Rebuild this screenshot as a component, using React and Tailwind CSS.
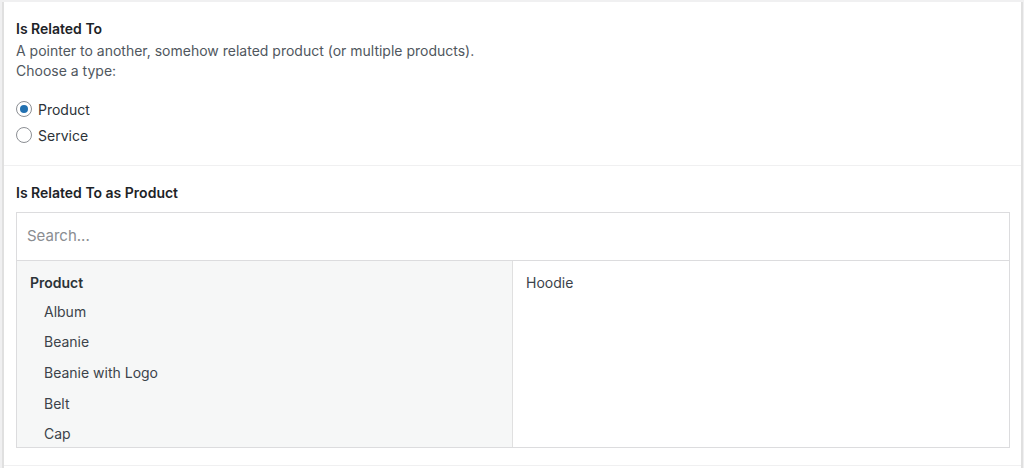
import React, { useState } from "react";

const products = ["Album", "Beanie", "Beanie with Logo", "Belt", "Cap"];

const Radio = ({ checked, label, onChange }) => (
  <label className="flex items-center gap-[6px] h-[26px] cursor-pointer" onClick={onChange}>
    <span className="w-[16px] h-[16px] rounded-full border border-[#8c8f94] bg-white flex items-center justify-center">
      {checked && <span className="w-[8px] h-[8px] rounded-full bg-[#2271b1]" />}
    </span>
    <span className="text-[14px] text-[#2c3338]">{label}</span>
  </label>
);

const App = () => {
  const [type, setType] = useState("product");

  return (
    <div
      className="w-[1024px] h-[468px] overflow-hidden bg-[#f0f0f1] pt-[2px] pl-[2px] pr-[1px]"
      style={{ fontFamily: "Inter, Roboto, 'Noto Sans', sans-serif" }}
    >
      <div className="h-full bg-white border-l-2 border-r-2 border-[#e0e0e0]">
        <div className="pl-[12px] pt-[18px] pb-[17px] border-b border-[#f0f0f1]">
          <h3 className="text-[14px] font-semibold text-[#1d2327] leading-[18px]">Is Related To</h3>
          <p className="mt-[3px] text-[14px] text-[#50575e] leading-[20px]">
            A pointer to another, somehow related product (or multiple products).
          </p>
          <p className="text-[14px] text-[#50575e] leading-[20px]">Choose a type:</p>
          <div className="mt-[15px] flex flex-col">
            <Radio checked={type === "product"} label="Product" onChange={() => setType("product")} />
            <Radio checked={type === "service"} label="Service" onChange={() => setType("service")} />
          </div>
        </div>

        <div className="pl-[12px] pr-[11px] pt-[18px] pb-[17px] border-b border-[#f0f0f1]">
          <h3 className="text-[14px] font-semibold text-[#1d2327] leading-[18px]">Is Related To as Product</h3>
          <div className="mt-[10px] border border-[#dcdcde]">
            <div className="h-[48px] flex items-center px-[10px] border-b border-[#dcdcde]">
              <input
                className="w-full text-[15px] text-[#2c3338] placeholder-[#8a8d91] outline-none bg-transparent"
                placeholder="Search..."
              />
            </div>
            <div className="grid grid-cols-2 h-[186px] overflow-hidden">
              <div className="bg-[#f6f7f7] border-r border-[#e0e0e0] pt-[7px]">
                <div className="px-[13px] h-[28px] flex items-center text-[14px] font-semibold text-[#2c3338]">
                  Product
                </div>
                {products.map((p) => (
                  <div key={p} className="pl-[27px] h-[30.6px] flex items-center text-[14px] text-[#3c434a]">
                    {p}
                  </div>
                ))}
              </div>
              <div className="pt-[7px]">
                <div className="px-[13px] h-[28px] flex items-center text-[14px] text-[#3c434a]">Hoodie</div>
              </div>
            </div>
          </div>
        </div>
      </div>
    </div>
  );
};

export default App;
